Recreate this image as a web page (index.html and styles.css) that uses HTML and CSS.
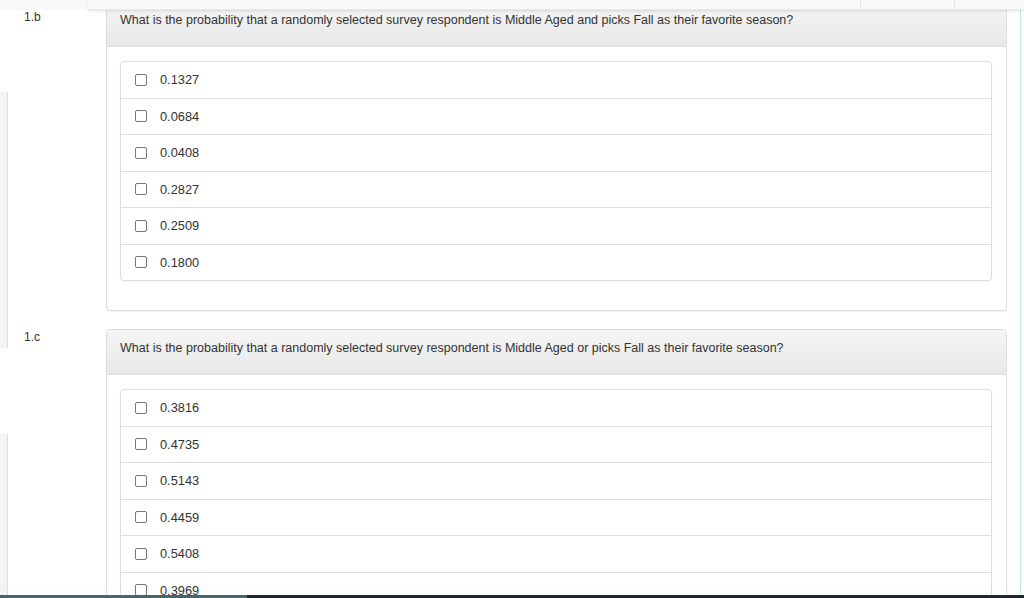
FILE: index.html
```html
<!DOCTYPE html>
<html>
<head>
<meta charset="utf-8">
<link rel="stylesheet" href="styles.css">
</head>
<body>
<div class="layout">
  <div class="rail">
    <div class="rail-seg seg-1"></div>
    <div class="rail-seg seg-2"></div>
  </div>
  <div class="labels">
    <div class="qlabel ql-1">1.b</div>
    <div class="qlabel ql-2">1.c</div>
  </div>
  <div class="main">
    <section class="panel">
      <div class="panel-head">What is the probability that a randomly selected survey respondent is Middle Aged and picks Fall as their favorite season?</div>
      <div class="panel-body">
        <ul class="options">
          <li class="option"><span class="box"></span><span>0.1327</span></li>
          <li class="option"><span class="box"></span><span>0.0684</span></li>
          <li class="option"><span class="box"></span><span>0.0408</span></li>
          <li class="option"><span class="box"></span><span>0.2827</span></li>
          <li class="option"><span class="box"></span><span>0.2509</span></li>
          <li class="option"><span class="box"></span><span>0.1800</span></li>
        </ul>
      </div>
    </section>
    <section class="panel">
      <div class="panel-head">What is the probability that a randomly selected survey respondent is Middle Aged or picks Fall as their favorite season?</div>
      <div class="panel-body">
        <ul class="options">
          <li class="option"><span class="box"></span><span>0.3816</span></li>
          <li class="option"><span class="box"></span><span>0.4735</span></li>
          <li class="option"><span class="box"></span><span>0.5143</span></li>
          <li class="option"><span class="box"></span><span>0.4459</span></li>
          <li class="option"><span class="box"></span><span>0.5408</span></li>
          <li class="option"><span class="box"></span><span>0.3969</span></li>
        </ul>
      </div>
    </section>
  </div>
  <div class="gutter"></div>
</div>
<div class="topbar">
  <div class="tb-left"></div>
  <div class="tb-right">
    <div class="tb-cell tb-wide"></div>
    <div class="tb-cell tb-a"></div>
    <div class="tb-cell tb-b"></div>
  </div>
</div>
<div class="dock">
  <div class="dock-left"></div>
  <div class="dock-right"></div>
</div>
</body>
</html>
```
FILE: styles.css
```css
html, body {
  margin: 0;
  padding: 0;
  height: 598px;
  overflow: hidden;
  background: #ffffff;
  font-family: "Liberation Sans", Arial, sans-serif;
  font-size: 12.5px;
  color: #333333;
}

.layout {
  display: flex;
  flex-direction: row;
  width: 1024px;
  height: 598px;
}

.rail {
  width: 8px;
  flex: none;
  display: flex;
  flex-direction: column;
}
.rail-seg {
  width: 7px;
  background: #f4f4f4;
  border-right: 1px solid #c3e9ec;
}
.seg-1 { margin-top: 92px; height: 256px; }
.seg-2 { margin-top: 86px; flex: 1; }

.labels {
  width: 98px;
  flex: none;
  padding-left: 16px;
  box-sizing: border-box;
  font-size: 12px;
}
.qlabel {
  line-height: 13px;
  height: 13px;
}
.ql-1 { margin-top: 11px; }
.ql-2 { margin-top: 307px; }

.main {
  width: 901px;
  flex: none;
  padding-top: 1px;
}

.panel {
  border: 1px solid #dddddd;
  border-radius: 4px;
  background: #ffffff;
  box-shadow: 0 1px 1px rgba(0,0,0,0.04);
  margin-bottom: 18px;
}
.panel-head {
  padding: 11px 13px 0 13px;
  box-sizing: border-box;
  height: 45px;
  line-height: 14px;
  background: linear-gradient(#f5f5f5, #e8e8e8);
  border-bottom: 1px solid #dddddd;
  border-radius: 3px 3px 0 0;
  white-space: nowrap;
}
.panel-body {
  padding: 14px 14px 29px 13px;
}

.options {
  list-style: none;
  margin: 0;
  padding: 0;
  border: 1px solid #dddddd;
  border-radius: 4px;
  box-shadow: 0 1px 2px rgba(0,0,0,0.05);
  background: #ffffff;
  font-size: 12.8px;
}
.option {
  display: flex;
  align-items: center;
  height: 35.5px;
  padding-left: 14px;
  border-top: 1px solid #dddddd;
}
.option:first-child {
  border-top: none;
}
.box {
  width: 10px;
  height: 10px;
  border: 1px solid #777777;
  border-radius: 2px;
  background: #ffffff;
  margin-right: 13px;
  flex: none;
}

.gutter {
  width: 13px;
  flex: none;
  border-right: 1px solid #bfe8ec;
  margin-top: 10px;
}

.topbar {
  position: absolute;
  left: 0;
  top: 0;
  width: 1024px;
  height: 10px;
  display: flex;
}
.tb-left {
  width: 88px;
  background: #f9f9f9;
}
.tb-right {
  flex: 1;
  display: flex;
  background: #f9f9f9;
  box-shadow: 0 1px 3px rgba(0,0,0,0.12);
  border-bottom: 1px solid #e8e8e8;
  box-sizing: border-box;
}
.tb-cell { height: 100%; }
.tb-wide { width: 772px; border-right: 1px solid #dbe8ea; }
.tb-a { width: 93px; border-right: 1px solid #dbe8ea; }
.tb-b { flex: 1; }

.dock {
  position: absolute;
  left: 0;
  bottom: 0;
  width: 1024px;
  height: 3px;
  display: flex;
  box-shadow: 0 -6px 12px rgba(0,0,0,0.035);
}
.dock-left { width: 247px; background: #46656c; }
.dock-right { flex: 1; background: #1f2634; }
```
